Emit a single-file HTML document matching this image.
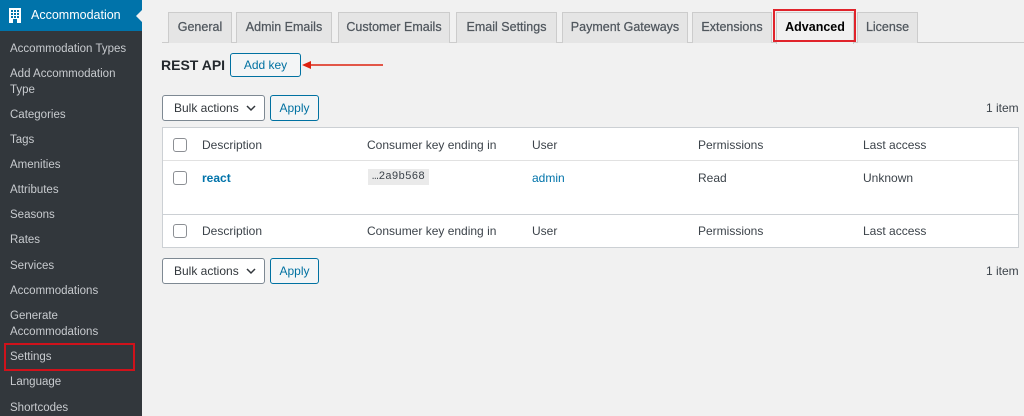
<!DOCTYPE html><html><head><style>
*{box-sizing:border-box;margin:0;padding:0}
body{width:1024px;height:416px;overflow:hidden;background:#f1f1f1;font-family:"Liberation Sans",sans-serif;font-size:12px;color:#23282d;position:relative}
.sb{position:absolute;left:0;top:0;width:142px;height:416px;background:#32373c}
.hd{position:absolute;left:0;top:0;width:142px;height:31px;background:#0073aa;color:#fff;font-size:12.5px;line-height:31px;padding-left:31px}
.hd:after{content:"";position:absolute;right:0;top:10px;border:6px solid transparent;border-right-color:#f1f1f1}
.sb .i{position:absolute;left:10px;color:#c8cbcf;font-size:11.5px;line-height:16px}
.tab{position:absolute;top:12px;height:31px;background:#e5e5e5;border:1px solid #ccc;border-bottom:none;font-size:12.5px;color:#50575e;text-align:center;line-height:29px;-webkit-text-stroke:0.25px #50575e}
.line{position:absolute;left:162px;right:0;top:42px;height:1px;background:#ccc}
.btn{position:absolute;border:1px solid #0071a1;border-radius:3px;color:#0071a1;background:#f3f5f6;text-align:center;font-size:12px}
.sel{position:absolute;border:1px solid #7e8993;border-radius:3px;background:#fff;color:#32373c;font-size:12px;padding-left:11px}
.tbl{position:absolute;left:162px;top:127px;width:857px;height:121px;background:#fff;border:1px solid #ccd0d4}
.r{position:absolute;left:0;right:0}
.cb{position:absolute;left:10px;width:14px;height:14px;border:1px solid #8c8f94;border-radius:3px;background:#fff}
.c{position:absolute;font-size:12px;color:#3c434a}
</style></head><body>
<div class="sb">
<div class="hd"><svg style="position:absolute;left:9px;top:8px" width="12" height="15" viewBox="0 0 12 15"><rect x="0" y="0" width="12" height="15" fill="#fff"/><g fill="#0073aa"><rect x="2" y="2" width="2" height="2"/><rect x="5" y="2" width="2" height="2"/><rect x="8" y="2" width="2" height="2"/><rect x="2" y="5" width="2" height="2"/><rect x="5" y="5" width="2" height="2"/><rect x="8" y="5" width="2" height="2"/><rect x="2" y="8" width="2" height="2"/><rect x="5" y="8" width="2" height="2"/><rect x="8" y="8" width="2" height="2"/><rect x="4" y="11" width="4" height="4"/></g></svg>Accommodation</div>
<div class="i" style="top:41px">Accommodation Types</div>
<div class="i" style="top:66px">Add Accommodation<br>Type</div>
<div class="i" style="top:107px">Categories</div>
<div class="i" style="top:132px">Tags</div>
<div class="i" style="top:157px">Amenities</div>
<div class="i" style="top:182px">Attributes</div>
<div class="i" style="top:207px">Seasons</div>
<div class="i" style="top:232px">Rates</div>
<div class="i" style="top:258px">Services</div>
<div class="i" style="top:283px">Accommodations</div>
<div class="i" style="top:308px">Generate<br>Accommodations</div>
<div class="i" style="top:349px">Settings</div>
<div style="position:absolute;left:4px;top:343px;width:131px;height:28px;border:2px solid #d0121b"></div>
<div class="i" style="top:374px">Language</div>
<div class="i" style="top:400px">Shortcodes</div>
</div>
<div class="line"></div>
<div class="tab" style="left:168px;width:64px">General</div>
<div class="tab" style="left:236px;width:96px">Admin Emails</div>
<div class="tab" style="left:338px;width:112px">Customer Emails</div>
<div class="tab" style="left:456px;width:101px">Email Settings</div>
<div class="tab" style="left:562px;width:126px">Payment Gateways</div>
<div class="tab" style="left:692px;width:80px">Extensions</div>
<div class="tab" style="left:776px;width:78px;background:#f1f1f1;color:#000;height:32px;font-weight:bold;-webkit-text-stroke:0">Advanced</div>
<div style="position:absolute;left:773px;top:9px;width:83px;height:33px;border:2px solid #e0232b"></div>
<div class="tab" style="left:857px;width:61px">License</div>
<div style="position:absolute;left:161px;top:57px;font-size:14px;font-weight:bold;color:#23282d">REST API</div>
<div class="btn" style="left:230px;top:53px;width:71px;height:24px;line-height:22px">Add key</div>
<svg style="position:absolute;left:300px;top:59px" width="85" height="12"><line x1="8" y1="6" x2="83" y2="6" stroke="#d21" stroke-width="1.5"/><polygon points="2,6 11,2 11,10" fill="#d21"/></svg>
<div class="sel" style="left:162px;top:95px;width:103px;height:26px;line-height:24px">Bulk actions<svg style="position:absolute;right:8px;top:9px" width="10" height="7"><path d="M1 1l4 4 4-4" stroke="#32373c" stroke-width="1.5" fill="none"/></svg></div>
<div class="btn" style="left:270px;top:95px;width:49px;height:26px;line-height:24px">Apply</div>
<div class="c" style="left:986px;top:101px">1 item</div>
<div class="tbl">
<div class="r" style="top:32px;border-top:1px solid #e1e1e1"></div>
<div class="r" style="top:86px;border-top:1px solid #ccd0d4"></div>
<div class="cb" style="top:10px"></div><div class="cb" style="top:43px"></div><div class="cb" style="top:96px"></div>
<div class="c" style="left:39px;top:10px">Description</div><div class="c" style="left:204px;top:10px">Consumer key ending in</div><div class="c" style="left:369px;top:10px">User</div><div class="c" style="left:535px;top:10px">Permissions</div><div class="c" style="left:700px;top:10px">Last access</div>
<div class="c" style="left:39px;top:43px;color:#0073aa;font-weight:bold">react</div>
<div class="c" style="left:205px;top:41px;background:#eaeaea;padding:2px 4px;font-size:11px;font-family:'Liberation Mono',monospace">…2a9b568</div>
<div class="c" style="left:369px;top:43px;color:#0073aa">admin</div><div class="c" style="left:535px;top:43px">Read</div><div class="c" style="left:700px;top:43px">Unknown</div>
<div class="c" style="left:39px;top:96px">Description</div><div class="c" style="left:204px;top:96px">Consumer key ending in</div><div class="c" style="left:369px;top:96px">User</div><div class="c" style="left:535px;top:96px">Permissions</div><div class="c" style="left:700px;top:96px">Last access</div>
</div>
<div class="sel" style="left:162px;top:258px;width:103px;height:26px;line-height:24px">Bulk actions<svg style="position:absolute;right:8px;top:9px" width="10" height="7"><path d="M1 1l4 4 4-4" stroke="#32373c" stroke-width="1.5" fill="none"/></svg></div>
<div class="btn" style="left:270px;top:258px;width:49px;height:26px;line-height:24px">Apply</div>
<div class="c" style="left:986px;top:264px">1 item</div>
</body></html>
